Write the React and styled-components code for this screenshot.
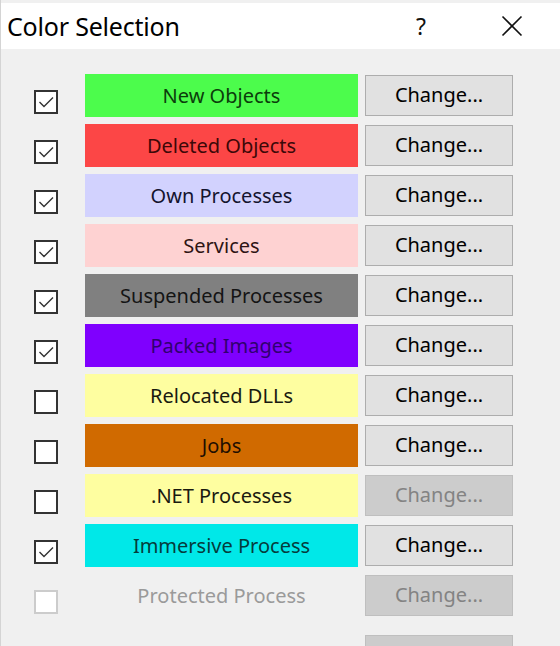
import React from "react";
import styled, { createGlobalStyle } from "styled-components";

const GlobalStyle = createGlobalStyle`
  html, body {
    margin: 0;
    padding: 0;
    background: #f0f0f0;
  }
  body {
    font-family: "Noto Sans", "Open Sans", sans-serif;
  }
`;

const ROWS = [
  { name: "New Objects", bg: "#4cfc4c", fg: "#0b3d0b", checked: true },
  { name: "Deleted Objects", bg: "#fc4646", fg: "#3d0808", checked: true },
  { name: "Own Processes", bg: "#d2d2fe", fg: "#14142e", checked: true },
  { name: "Services", bg: "#fed2d2", fg: "#2e1414", checked: true },
  { name: "Suspended Processes", bg: "#808080", fg: "#141414", checked: true },
  { name: "Packed Images", bg: "#7f00fe", fg: "#300070", checked: true },
  { name: "Relocated DLLs", bg: "#fefea0", fg: "#1a1a10", checked: false },
  { name: "Jobs", bg: "#d06a00", fg: "#1e0e00", checked: false },
  { name: ".NET Processes", bg: "#fefea0", fg: "#1a1a10", checked: false, disabled: true },
  { name: "Immersive Process", bg: "#00e8e8", fg: "#053c3c", checked: true },
  { name: "Protected Process", bg: "transparent", fg: "#9a9a9a", checked: false, disabled: true, grey: true },
];

export default function App() {
  return (
    <>
      <GlobalStyle />
      <Window>
        <TitleBar>
          <Title>Color Selection</Title>
          <HelpButton>?</HelpButton>
          <CloseButton>
            <svg width="22" height="22" viewBox="0 0 22 22">
              <path d="M1.5 1.5 L20.5 20.5 M20.5 1.5 L1.5 20.5" stroke="#111" strokeWidth="1.6" fill="none" />
            </svg>
          </CloseButton>
        </TitleBar>
        <Body>
          {ROWS.map((row) => (
            <Row key={row.name}>
              <CheckBox $disabled={row.grey}>
                {row.checked && (
                  <svg width="20" height="20" viewBox="0 0 20 20">
                    <path d="M3.5 10 L8 14.5 L17 5.5" stroke="#333" strokeWidth="1.4" fill="none" />
                  </svg>
                )}
              </CheckBox>
              <ColorLabel $bg={row.bg} $fg={row.fg}>
                {row.name}
              </ColorLabel>
              <ChangeButton $disabled={row.disabled}>Change...</ChangeButton>
            </Row>
          ))}
          <Row $last>
            <CheckBox $disabled $hidden />
            <ColorLabel $bg="transparent" $fg="#b4b4b4">
              Graph Background
            </ColorLabel>
            <ChangeButton $disabled>Change...</ChangeButton>
          </Row>
        </Body>
      </Window>
    </>
  );
}

const Window = styled.div`
  width: 560px;
  height: 646px;
  overflow: hidden;
  background: #f0f0f0;
  border-left: 1px solid #d4d4d4;
  box-sizing: border-box;
`;

const TitleBar = styled.div`
  height: 46px;
  margin-top: 3px;
  background: #ffffff;
  display: flex;
  align-items: center;
  padding-left: 6px;
`;

const Title = styled.div`
  flex: 1;
  font-size: 25px;
  color: #000;
  letter-spacing: -0.2px;
`;

const HelpButton = styled.div`
  width: 24px;
  margin-right: 68px;
  text-align: center;
  font-size: 23px;
  color: #111;
`;

const CloseButton = styled.div`
  width: 22px;
  height: 22px;
  margin-right: 37px;
  display: flex;
`;

const Body = styled.div`
  padding: 25px 0 0 33px;
  display: flex;
  flex-direction: column;
  gap: 7px;
`;

const Row = styled.div`
  display: grid;
  grid-template-columns: 44px 273px 148px;
  column-gap: 7px;
  height: 43px;
  margin-top: ${(p) => (p.$last ? "10px" : "0")};
`;

const CheckBox = styled.div`
  align-self: end;
  justify-self: start;
  margin-bottom: 3px;
  width: 24px;
  height: 24px;
  box-sizing: border-box;
  border: 2px solid ${(p) => (p.$disabled ? "#cccccc" : "#333333")};
  background: #ffffff;
  display: flex;
  align-items: center;
  justify-content: center;
  visibility: ${(p) => (p.$hidden ? "hidden" : "visible")};
`;

const ColorLabel = styled.div`
  background: ${(p) => p.$bg};
  color: ${(p) => p.$fg};
  font-size: 20px;
  display: flex;
  align-items: center;
  justify-content: center;
  padding-bottom: 1px;
  box-sizing: border-box;
`;

const ChangeButton = styled.div`
  margin-top: 1px;
  height: 41px;
  box-sizing: border-box;
  background: ${(p) => (p.$disabled ? "#cccccc" : "#e1e1e1")};
  border: 1px solid ${(p) => (p.$disabled ? "#bfbfbf" : "#adadad")};
  color: ${(p) => (p.$disabled ? "#838383" : "#000000")};
  font-size: 20px;
  display: flex;
  align-items: center;
  justify-content: center;
  padding-bottom: 2px;
`;
